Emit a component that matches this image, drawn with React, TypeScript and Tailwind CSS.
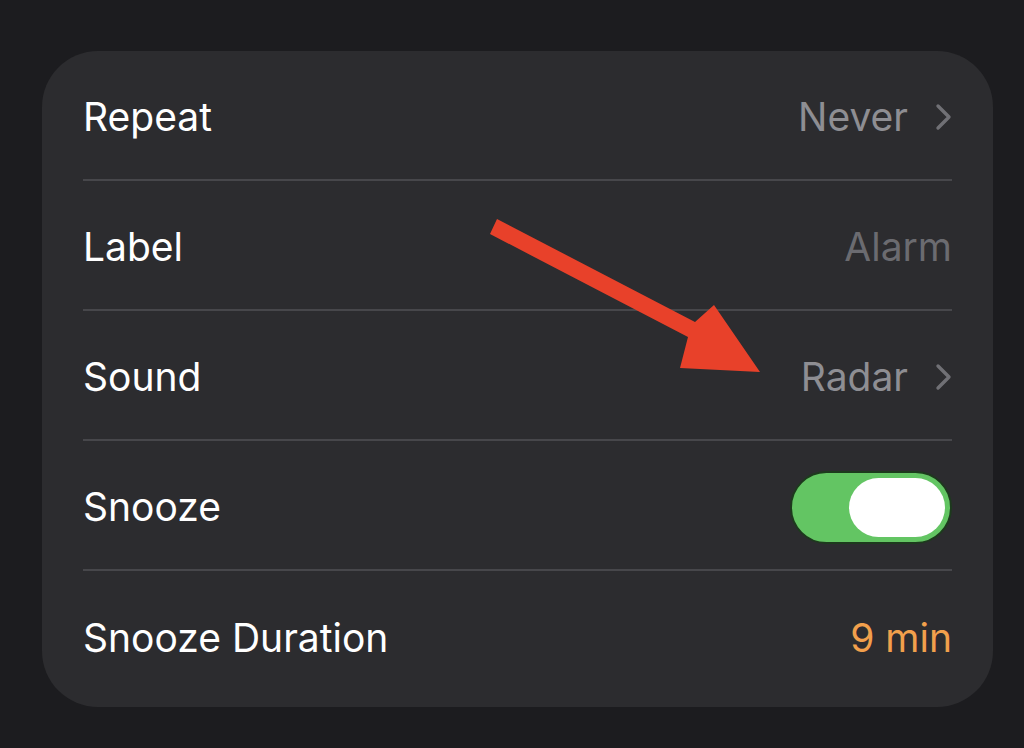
import type { FC, ReactNode } from 'react'

const Chevron: FC = () => (
    <svg width="18" height="30" viewBox="0 0 18 30" className="ml-[26px]">
        <path d="M4 4 L15 15 L4 26" fill="none" stroke="#707075" strokeWidth="3.4" strokeLinecap="round" strokeLinejoin="round" />
    </svg>
)

const Row: FC<{ label: string; last?: boolean; children?: ReactNode }> = ({ label, last, children }) => (
    <div className={`flex items-center justify-between h-[130px] pt-[4px] ${last ? '' : 'border-b-2 border-[#47474b]'}`}>
        <span className="text-white">{label}</span>
        <div className="flex items-center">{children}</div>
    </div>
)

const App: FC = () => {
    return (
        <div
            className="w-[1024px] h-[748px] bg-[#1c1c1f] pt-[51px] pl-[42px] overflow-hidden"
            style={{ fontFamily: 'Inter, "Noto Sans", sans-serif' }}
        >
            <div className="relative w-[951px] h-[656px] rounded-[56px] bg-[#2c2c2f] px-[41px] text-[39px]">
                <Row label="Repeat">
                    <span className="text-[#8e8e93]">Never</span>
                    <Chevron />
                </Row>
                <Row label="Label">
                    <span className="text-[#6b6b70]">Alarm</span>
                </Row>
                <Row label="Sound">
                    <span className="text-[#8e8e93]">Radar</span>
                    <Chevron />
                </Row>
                <Row label="Snooze">
                    <div className="w-[162px] h-[73px] rounded-full bg-[#63c563] border-2 border-[#1d3a1d] p-[5px] flex justify-end">
                        <div className="w-[96px] h-full rounded-full bg-white" />
                    </div>
                </Row>
                <Row label="Snooze Duration" last>
                    <span className="text-[#f2a04c]">9 min</span>
                </Row>

                <svg className="absolute left-0 top-0 pointer-events-none" width="951" height="656" viewBox="0 0 951 656">
                    <g transform="translate(-42 -51)">
                        <polygon
                            points="490,234 497,219 695,322 714,305 760,372 680,368 688,337"
                            fill="#e8412a"
                        />
                    </g>
                </svg>
            </div>
        </div>
    )
}

export default App
